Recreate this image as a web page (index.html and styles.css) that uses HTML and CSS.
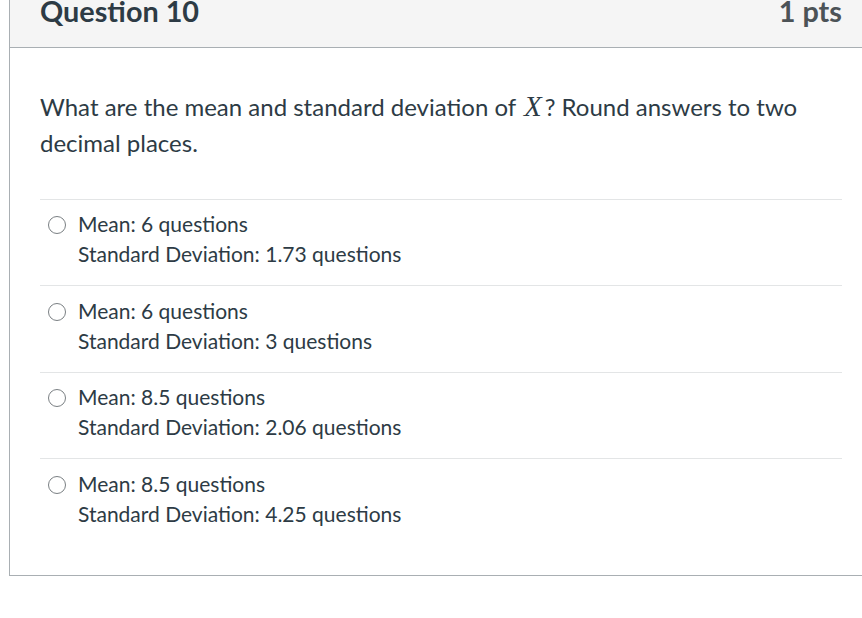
FILE: index.html
```html
<!DOCTYPE html>
<html>
<head>
<meta charset="utf-8">
<link rel="stylesheet" href="styles.css">
</head>
<body>
<div class="panel">
  <div class="header">
    <span class="title">Question 10</span>
    <span class="pts">1 pts</span>
  </div>
  <div class="content">
    <p class="qtext">What are the mean and standard deviation of <span class="math">X</span>? Round answers to two decimal places.</p>
    <div class="answers">
      <label class="answer"><span class="radio"></span><span class="atext">Mean: 6 questions<br>Standard Deviation: 1.73 questions</span></label>
      <label class="answer"><span class="radio"></span><span class="atext">Mean: 6 questions<br>Standard Deviation: 3 questions</span></label>
      <label class="answer"><span class="radio"></span><span class="atext">Mean: 8.5 questions<br>Standard Deviation: 2.06 questions</span></label>
      <label class="answer"><span class="radio"></span><span class="atext">Mean: 8.5 questions<br>Standard Deviation: 4.25 questions</span></label>
    </div>
  </div>
</div>
</body>
</html>
```
FILE: styles.css
```css
html, body {
  margin: 0;
  padding: 0;
  background: #fff;
  overflow: hidden;
}
body {
  font-family: Lato, "Open Sans", sans-serif;
  color: #2d3b45;
}
.panel {
  box-sizing: border-box;
  width: 856px;
  margin: -12px 0 0 9px;
  border: 1px solid #a9afb3;
}
.header {
  display: flex;
  justify-content: space-between;
  align-items: flex-start;
  background: #f5f5f5;
  border-bottom: 1px solid #a9afb3;
  padding: 7.5px 22px 21.7px 30px;
  height: 28.8px;
}
.title {
  font-size: 28.8px;
  line-height: 28.8px;
  font-weight: 700;
  color: #2d3b45;
}
.pts {
  font-size: 28.8px;
  line-height: 28.8px;
  font-weight: 700;
  color: #4c5357;
}
.content {
  padding: 40.7px 22px 30px 30px;
}
.qtext {
  margin: 0 0 38px 0;
  font-size: 24px;
  line-height: 36px;
}
.math {
  font-family: "Liberation Serif", "DejaVu Serif", serif;
  font-style: italic;
  font-size: 29px;
  line-height: 0;
  margin: 0 3px 0 2px;
}
.answers {
  display: flex;
  flex-direction: column;
}
.answer {
  display: flex;
  align-items: flex-start;
  border-top: 1px solid #e3e5e6;
  padding: 9.5px 0 16px 8px;
}
.radio {
  box-sizing: border-box;
  flex: none;
  width: 18px;
  height: 18px;
  margin-top: 7px;
  margin-right: 12px;
  border: 1.5px solid #7a7f83;
  border-radius: 50%;
}
.atext {
  font-size: 21px;
  line-height: 30px;
}
```
